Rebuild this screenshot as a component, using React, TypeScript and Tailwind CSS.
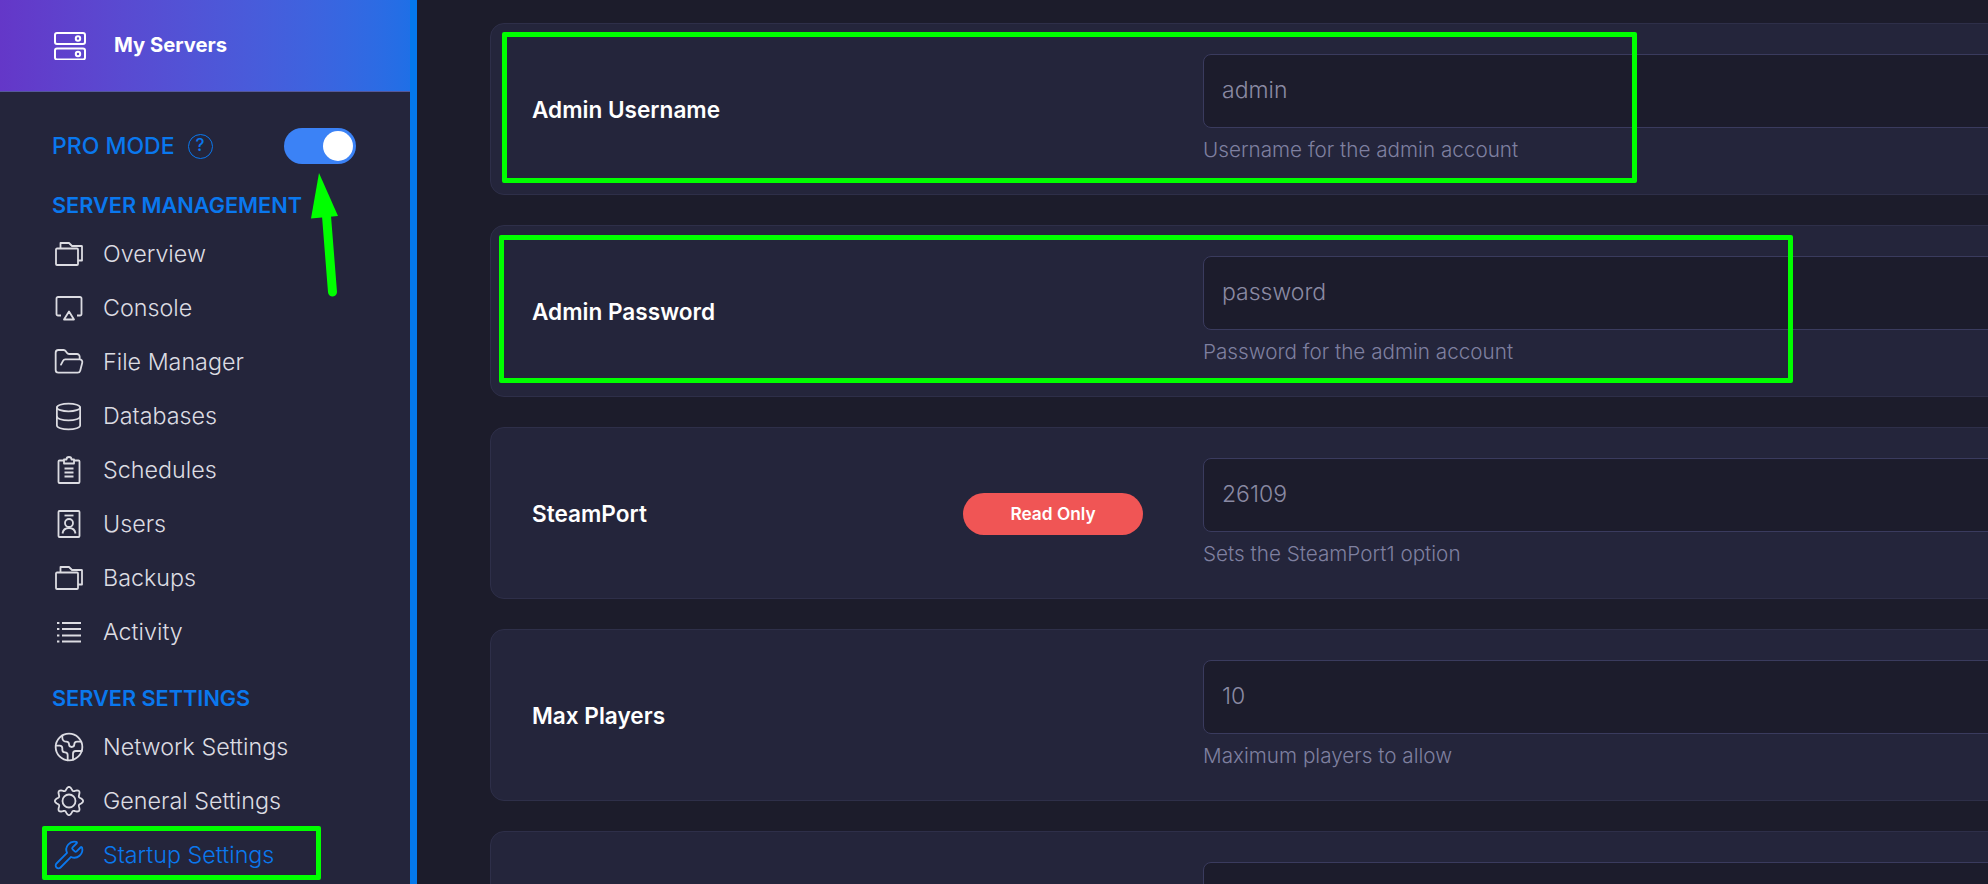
import { Database, Earth, FolderOpen, Wrench } from "lucide-react";
import type { ReactNode } from "react";

const FoldersIcon = () => (
  <svg width="28" height="24" viewBox="0 0 28 24" fill="none" stroke="currentColor" strokeWidth="1.8" strokeLinejoin="round">
    <path d="M1 7.5a1 1 0 0 1 1-1H22a1 1 0 0 1 1 1V22a1 1 0 0 1-1 1H2a1 1 0 0 1-1-1z" />
    <path d="M5.5 6.5V1H14L17 4H26.5a.5.5 0 0 1 .5.5V18.5H23" />
  </svg>
);

const ScreenIcon = () => (
  <svg width="28" height="25" viewBox="0 0 28 25" fill="none" stroke="currentColor" strokeWidth="1.8" strokeLinejoin="round">
    <path d="M6 19.5H3a1.5 1.5 0 0 1-1.5-1.5V2.5A1.5 1.5 0 0 1 3 1H25a1.5 1.5 0 0 1 1.5 1.5V18a1.5 1.5 0 0 1-1.5 1.5H22" />
    <path d="M14 15.5L19 23.5H9z" />
  </svg>
);

const ServerIcon = () => (
  <svg width="32" height="28" viewBox="0 0 32 28" fill="none" stroke="currentColor" strokeWidth="2">
    <rect x="1" y="1" width="30" height="11" rx="2" />
    <rect x="1" y="16.5" width="30" height="11" rx="2" />
    <circle cx="24" cy="6.5" r="2.2" />
    <circle cx="24" cy="22" r="2.2" />
  </svg>
);

const ClipboardIcon = () => (
  <svg width="24" height="28" viewBox="0 0 24 28" fill="none" stroke="currentColor" strokeWidth="1.8" strokeLinejoin="round">
    <path d="M7 4.5H2.5a1 1 0 0 0-1 1V26a1 1 0 0 0 1 1h19a1 1 0 0 0 1-1V5.5a1 1 0 0 0-1-1H17" />
    <path d="M7 7.5V3.5H9.5a2.5 2.5 0 0 1 5 0H17V7.5z" />
    <path d="M7.5 12.5H16.5M7.5 16.5H16.5M7.5 20.5H16.5" />
  </svg>
);

const ContactIcon = () => (
  <svg width="24" height="28" viewBox="0 0 24 28" fill="none" stroke="currentColor" strokeWidth="1.8" strokeLinejoin="round">
    <rect x="1.5" y="1" width="21" height="26" rx="1" />
    <path d="M7.5 5.5H16.5" />
    <circle cx="12" cy="13" r="4" />
    <path d="M5.5 23.5c.5-3.5 3-5.5 6.5-5.5s6 2 6.5 5.5" />
  </svg>
);

const ListIcon = () => (
  <svg width="26" height="22" viewBox="0 0 26 22" fill="none" stroke="currentColor" strokeWidth="1.8">
    <path d="M6 2H25M6 8H25M6 14.5H25M6 20.5H25" />
    <path d="M1 2H3.4M1 8H3.4M1 14.5H3.4M1 20.5H3.4" strokeWidth="2" />
  </svg>
);

// eight lobed cog, same shape as the one in the sidebar
const gearPath = () => {
  const points = Array.from({ length: 96 }, (_, i) => {
    const a = (i / 96) * Math.PI * 2;
    const r = 12.4 + 1.7 * Math.cos(8 * a);
    return `${(15 + r * Math.cos(a)).toFixed(2)} ${(15 + r * Math.sin(a)).toFixed(2)}`;
  });
  return `M${points.join("L")}z`;
};

const GearIcon = () => (
  <svg width="30" height="30" viewBox="0 0 30 30" fill="none" stroke="currentColor" strokeWidth="1.8" strokeLinejoin="round">
    <path d={gearPath()} />
    <circle cx="15" cy="15" r="6.5" />
  </svg>
);

const NavItem = ({ icon, label, active }: { icon: ReactNode; label: string; active?: boolean }) => (
  <div className={`flex h-[54px] items-center ${active ? "text-[#0a78ee]" : "text-[#dcdce2]"}`}>
    <span className="flex w-[33px] shrink-0 items-center justify-center">{icon}</span>
    <span className="ml-[18px] text-[23.3px] font-light">{label}</span>
  </div>
);

const Heading = ({ children }: { children: ReactNode }) => (
  <div className="flex h-[44px] items-center text-[21.7px] font-semibold text-[#0a78ee]">{children}</div>
);

const fields = [
  { label: "Admin Username", value: "admin", help: "Username for the admin account" },
  { label: "Admin Password", value: "password", help: "Password for the admin account" },
  { label: "SteamPort", value: "26109", help: "Sets the SteamPort1 option", readOnly: true },
  { label: "Max Players", value: "10", help: "Maximum players to allow" },
  { label: "", value: "", help: "" },
];

const FieldCard = ({ label, value, help, readOnly }: { label: string; value: string; help: string; readOnly?: boolean }) => (
  <div className="flex h-[172px] w-[1600px] shrink-0 rounded-[14px] border border-[#2e2f49] bg-[#24253b] pl-[41px] pt-[30px]">
    <div className="flex h-[112px] w-[671px] shrink-0 items-center justify-between pr-[60px]">
      <span className="text-[22.6px] font-semibold text-white">{label}</span>
      {readOnly && (
        <span className="mb-[1px] flex h-[42px] w-[180px] items-center justify-center rounded-full bg-[#f05555] text-[17.3px] font-semibold text-white">
          Read Only
        </span>
      )}
    </div>
    <div className="w-full">
      <div className="flex h-[74px] items-center rounded-lg border border-[#3a3b5e] bg-[#1c1c2c] pb-[1px] pl-[18px] text-[23px] font-light text-[#8a8aa3]">
        {value}
      </div>
      <p className="mt-[6px] text-[20.7px] font-light text-[#7f80a0]">{help}</p>
    </div>
  </div>
);

const Marker = ({ className }: { className: string }) => (
  <div className={`absolute rounded-[2px] border-[5px] border-[#00ff00] ${className}`} />
);

export default function App() {
  return (
    <div
      className="relative flex h-[884px] w-[1988px] overflow-hidden bg-[#1c1c2b]"
      style={{ fontFamily: "Inter, 'Liberation Sans', sans-serif" }}
    >
      <aside className="h-full w-[417px] shrink-0 border-r-[7px] border-[#0479ec] bg-[#24253b]">
        <div className="flex h-[92px] items-center border-b border-[#55589a] bg-gradient-to-r from-[#6437c8] to-[#1f6fe6] pl-[54px] text-white">
          <ServerIcon />
          <span className="ml-[28px] text-[20.2px] font-bold">My Servers</span>
        </div>
        <div className="pl-[52px] pr-[54px] pt-[36px]">
          <div className="flex h-[36px] items-center justify-between">
            <div className="flex items-center gap-[13px] text-[#0a78ee]">
              <span className="text-[23px] font-medium">PRO MODE</span>
              <span className="flex h-[25px] w-[25px] items-center justify-center rounded-full border-[1.5px] border-[#0a78ee] text-[17px] font-medium">?</span>
            </div>
            <div className="flex h-[36px] w-[72px] items-center justify-end rounded-full bg-[#3b82f6] pr-[3px]">
              <span className="h-[30px] w-[30px] rounded-full bg-white" />
            </div>
          </div>
          <div className="mt-[19px]">
            <Heading>SERVER MANAGEMENT</Heading>
          </div>
          <NavItem icon={<FoldersIcon />} label="Overview" />
          <NavItem icon={<ScreenIcon />} label="Console" />
          <NavItem icon={<FolderOpen size={32} strokeWidth={1.35} />} label="File Manager" />
          <NavItem icon={<Database size={31} strokeWidth={1.35} />} label="Databases" />
          <NavItem icon={<ClipboardIcon />} label="Schedules" />
          <NavItem icon={<ContactIcon />} label="Users" />
          <NavItem icon={<FoldersIcon />} label="Backups" />
          <NavItem icon={<ListIcon />} label="Activity" />
          <div className="mt-[17px]">
            <Heading>SERVER SETTINGS</Heading>
          </div>
          <NavItem icon={<Earth size={32} strokeWidth={1.35} />} label="Network Settings" />
          <NavItem icon={<GearIcon />} label="General Settings" />
          <NavItem icon={<Wrench size={32} strokeWidth={1.35} />} label="Startup Settings" active />
        </div>
      </aside>
      <main className="flex flex-col gap-[30px] pl-[73px] pt-[23px]">
        {fields.map((f, i) => (
          <FieldCard key={i} {...f} />
        ))}
      </main>

      {/* green annotations drawn over the screenshot */}
      <Marker className="left-[502px] top-[32px] h-[151px] w-[1135px]" />
      <Marker className="left-[499px] top-[235px] h-[148px] w-[1294px]" />
      <Marker className="left-[42px] top-[826px] h-[54px] w-[279px]" />
      <svg className="absolute left-[305px] top-[170px]" width="40" height="135" viewBox="0 0 40 135">
        <path d="M14 3L33 46L6 48.5z" fill="#00ff00" />
        <path d="M21.5 46L27.5 122" stroke="#00ff00" strokeWidth="9" strokeLinecap="round" />
      </svg>
    </div>
  );
}
